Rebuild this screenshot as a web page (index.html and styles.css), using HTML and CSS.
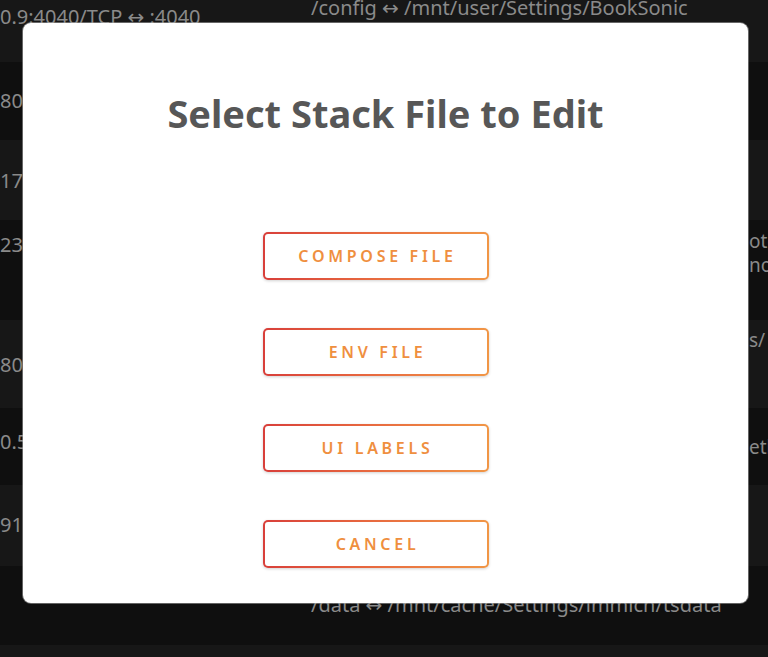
FILE: index.html
```html
<!DOCTYPE html>
<html lang="en">
<head>
<meta charset="utf-8">
<title>Select Stack File to Edit</title>
<link rel="stylesheet" href="styles.css">
</head>
<body>
<div class="table">
  <div class="row r0 light">
    <div class="cell left t5">0.9:4040/TCP ↔ :4040</div>
    <div class="cell mid tm4">/config ↔ /mnt/user/Settings/BookSonic</div>
    <div class="cell right"></div>
  </div>
  <div class="row r1 dark">
    <div class="cell left t27">80:8080/TCP ↔ :8080</div>
    <div class="cell mid t27">/config ↔ /mnt/user/Settings/Calibre</div>
    <div class="cell right"></div>
  </div>
  <div class="row r2 light">
    <div class="cell left t29">17:3000/TCP ↔ :3000</div>
    <div class="cell mid t29">/data ↔ /mnt/user/Settings/Homepage</div>
    <div class="cell right"></div>
  </div>
  <div class="row r3 dark">
    <div class="cell left t13">23:2283/TCP ↔ :2283</div>
    <div class="cell mid t9">/photos ↔ /mnt/user/Photos</div>
    <div class="cell right t9">oto<br>not</div>
  </div>
  <div class="row r4 light">
    <div class="cell left t33">80:8096/TCP ↔ :8096</div>
    <div class="cell mid t8">/media ↔ /mnt/user/Media</div>
    <div class="cell right t8">s/</div>
  </div>
  <div class="row r5 dark">
    <div class="cell left t22">0.5:51820/UDP ↔ :51820</div>
    <div class="cell mid t27">/config ↔ /mnt/user/Settings/wireguard</div>
    <div class="cell right t27">eth</div>
  </div>
  <div class="row r6 light">
    <div class="cell left t28">91:5432/TCP ↔ :5432</div>
    <div class="cell mid t28">/var/lib/postgresql ↔ /mnt/cache/db</div>
    <div class="cell right"></div>
  </div>
  <div class="row r7 dark">
    <div class="cell left"></div>
    <div class="cell mid t27">/data ↔ /mnt/cache/Settings/immich/tsdata</div>
    <div class="cell right"></div>
  </div>
  <div class="row r8 light">
    <div class="cell left"></div>
    <div class="cell mid"></div>
    <div class="cell right"></div>
  </div>
</div>

<div class="modal">
  <h1 class="modal-title">Select Stack File to Edit</h1>
  <div class="actions">
    <button class="btn">Compose File</button>
    <button class="btn">Env File</button>
    <button class="btn">UI Labels</button>
    <button class="btn">Cancel</button>
  </div>
</div>
</body>
</html>
```

FILE: styles.css
```css
html, body {
  margin: 0;
  padding: 0;
  width: 768px;
  height: 657px;
  overflow: hidden;
  background: #101010;
}

.table {
  display: flex;
  flex-direction: column;
  font-family: "Noto Sans", "DejaVu Sans", sans-serif;
  font-size: 20px;
  line-height: 24px;
  color: #8a8a8a;
}

.row {
  display: grid;
  grid-template-columns: 311px 437px 1fr;
  overflow: hidden;
}

.light { background: #171717; }
.dark { background: #0f0f0f; }

.r0 { height: 62px; }
.r1 { height: 78px; }
.r2 { height: 80px; }
.r3 { height: 100px; }
.r4 { height: 88px; }
.r5 { height: 77px; }
.r6 { height: 81px; }
.r7 { height: 79px; }
.r8 { height: 12px; }

.cell {
  white-space: nowrap;
  overflow: hidden;
}

.right {
  padding-left: 1px;
  font-size: 19px;
}

.t5 { padding-top: 5px; }
.tm4 { margin-top: -4px; }
.t8 { padding-top: 8px; }
.t9 { padding-top: 9px; }
.t13 { padding-top: 13px; }
.t22 { padding-top: 22px; }
.t27 { padding-top: 27px; }
.t28 { padding-top: 28px; }
.t29 { padding-top: 29px; }
.t33 { padding-top: 33px; }

.modal {
  position: absolute;
  left: 23px;
  top: 23px;
  width: 725px;
  height: 580px;
  box-sizing: border-box;
  background: #ffffff;
  border-radius: 8px;
  box-shadow: 0 0 0 1px rgba(170, 170, 170, 0.55);
  display: flex;
  flex-direction: column;
  align-items: center;
  padding-top: 67px;
}

.modal-title {
  margin: 0;
  font-family: "Noto Sans", "Open Sans", sans-serif;
  font-weight: 700;
  font-size: 38px;
  line-height: 46px;
  color: #575757;
}

.actions {
  margin-top: 96px;
  margin-right: 19px;
  display: flex;
  flex-direction: column;
  gap: 48px;
}

.btn {
  width: 226px;
  height: 48px;
  box-sizing: border-box;
  border: 2px solid transparent;
  border-radius: 5px;
  background:
    linear-gradient(#ffffff, #ffffff) padding-box,
    linear-gradient(90deg, #d83f3a 0%, #e7673f 45%, #f19646 100%) border-box;
  box-shadow: 0 1px 3px rgba(0, 0, 0, 0.18);
  font-family: "Noto Sans", "Open Sans", sans-serif;
  font-weight: 600;
  font-size: 16px;
  letter-spacing: 3.7px;
  text-transform: uppercase;
  color: #ef8f3f;
  padding: 0 0 0 3px;
  cursor: pointer;
}
```
